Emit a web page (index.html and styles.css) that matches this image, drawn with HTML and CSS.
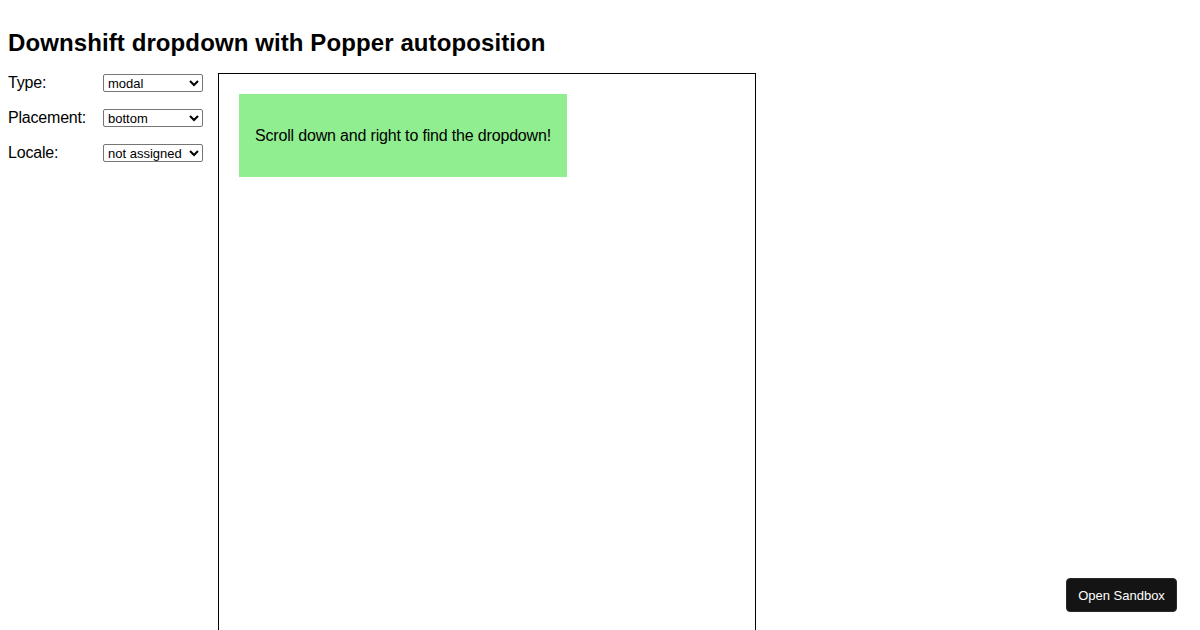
FILE: index.html
```html
<!DOCTYPE html>
<html>
<head>
<meta charset="utf-8">
<link rel="stylesheet" href="styles.css">
</head>
<body>
<h1 class="title">Downshift dropdown with Popper autoposition</h1>
<div class="layout">
  <div class="controls">
    <div class="row">
      <label class="label">Type:</label>
      <select class="select"><option>modal</option></select>
    </div>
    <div class="row">
      <label class="label">Placement:</label>
      <select class="select"><option>bottom</option></select>
    </div>
    <div class="row">
      <label class="label">Locale:</label>
      <select class="select"><option>not assigned</option></select>
    </div>
  </div>
  <div class="scroller">
    <div class="hint">Scroll down and right to find the dropdown!</div>
  </div>
</div>
<button class="sandbox">Open Sandbox</button>
</body>
</html>
```
FILE: styles.css
```css
html, body {
  margin: 0;
  padding: 0;
  background: #fff;
}
body {
  padding: 8px;
  font-family: "Liberation Sans", Arial, sans-serif;
  color: #000;
  overflow: hidden;
  height: 630px;
  box-sizing: border-box;
}
.title {
  font-size: 24px;
  font-weight: bold;
  margin: 21px 0 16px;
  line-height: 28px;
  letter-spacing: 0.1px;
}
.layout {
  display: flex;
  align-items: flex-start;
  gap: 15px;
}
.controls {
  width: 195px;
  display: flex;
  flex-direction: column;
  gap: 17px;
  padding-top: 1px;
}
.row {
  display: flex;
  align-items: center;
  height: 18px;
}
.label {
  width: 95px;
  font-size: 16px;
  letter-spacing: -0.2px;
}
.select {
  width: 100px;
  height: 18px;
  font-family: "Liberation Sans", Arial, sans-serif;
  font-size: 13px;
  padding: 0;
  border: 1px solid #767676;
  border-radius: 2px;
  background: #fff;
  color: #000;
}
.scroller {
  height: 700px;
  border: 1px solid #000;
  padding: 20px;
  box-sizing: border-box;
  width: 538px;
}
.hint {
  display: inline-block;
  background: #90ee90;
  font-size: 16px;
  padding: 32px 16px;
  line-height: 19px;
  letter-spacing: -0.17px;
}
.sandbox {
  position: fixed;
  right: 23px;
  bottom: 18px;
  width: 111px;
  height: 34px;
  background: #141414;
  color: #fff;
  border: 1px solid #2a2a2a;
  border-radius: 4px;
  font-family: "Liberation Sans", Arial, sans-serif;
  font-size: 13px;
  padding: 0;
}
```
